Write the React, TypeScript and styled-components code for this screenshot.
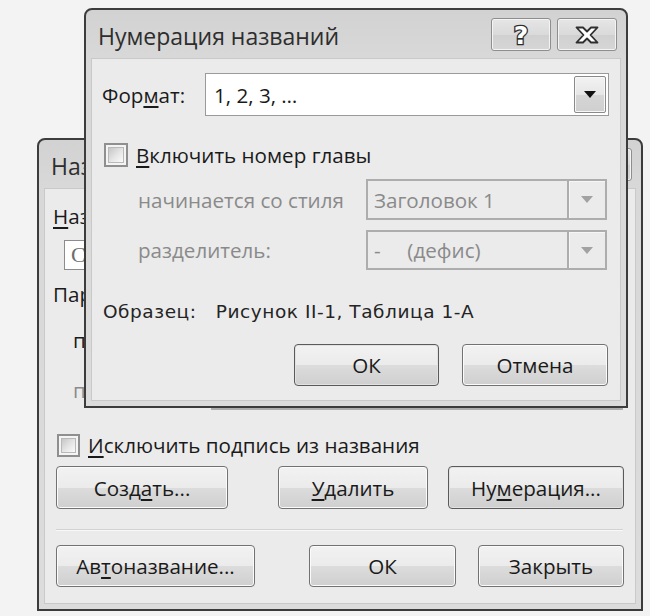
import React from "react";
import styled, { createGlobalStyle } from "styled-components";

const Global = createGlobalStyle`
  html, body { margin: 0; padding: 0; background: #f3f3f3; }
  body { font-family: "Open Sans", "Noto Sans", sans-serif; color: #1a1a1a; }
  * { box-sizing: border-box; }
`;

const Desktop = styled.div`
  position: relative;
  width: 650px;
  height: 616px;
  overflow: hidden;
  background: #f3f3f3;
`;

const Window = styled.div<{ $x: number; $y: number; $w: number; $h: number }>`
  position: absolute;
  left: ${(p) => p.$x}px;
  top: ${(p) => p.$y}px;
  width: ${(p) => p.$w}px;
  height: ${(p) => p.$h}px;
  border: 2px solid #3c3c3c;
  border-radius: 8px 8px 0 0;
  background: linear-gradient(#d2d2d2, #d8d8d8 46px, #dcdcdc);
  display: flex;
  flex-direction: column;
  padding: 0 5px 5px;
`;

const TitleBar = styled.div`
  height: 48px;
  flex: none;
  display: flex;
  align-items: center;
  padding-left: 7px;
  padding-right: 4px;
`;

const TitleText = styled.div`
  flex: 1;
  font-size: 23px;
  color: #2e2e2e;
  white-space: nowrap;
  overflow: hidden;
  margin-top: 3px;
`;

const CaptionButtons = styled.div`
  display: flex;
  gap: 6px;
  align-self: flex-start;
  margin-top: 8px;
`;

const CaptionButton = styled.div`
  width: 60px;
  height: 33px;
  border: 1px solid #8e8e8e;
  border-radius: 3px;
  box-shadow: inset 0 0 0 1px #f4f4f4;
  background: linear-gradient(#e6e6e6, #dadada 50%, #d0d0d0 51%, #d6d6d6);
  display: flex;
  align-items: center;
  justify-content: center;
`;

const Client = styled.div`
  flex: 1;
  background: #ebebeb;
  border: 1px solid #c9c9c9;
  display: flex;
  flex-direction: column;
  font-size: 20.6px;
`;

const Row = styled.div<{ $mt: number; $pl: number; $pr?: number; $h?: number }>`
  display: flex;
  align-items: center;
  margin-top: ${(p) => p.$mt}px;
  padding-left: ${(p) => p.$pl}px;
  padding-right: ${(p) => p.$pr ?? 0}px;
  height: ${(p) => (p.$h ? `${p.$h}px` : "auto")};
  flex: none;
`;

const Label = styled.span<{ $w?: number; $disabled?: boolean }>`
  width: ${(p) => (p.$w ? `${p.$w}px` : "auto")};
  flex: none;
  white-space: nowrap;
  color: ${(p) => (p.$disabled ? "#8a8a8a" : "#1a1a1a")};
`;

const U = styled.span`
  text-decoration: underline;
  text-underline-offset: 3px;
  text-decoration-thickness: 2px;
`;

const Combo = styled.div<{ $disabled?: boolean; $h: number }>`
  flex: 1;
  height: ${(p) => p.$h}px;
  display: flex;
  align-items: stretch;
  border: ${(p) => (p.$disabled ? "2px solid #adadad" : "1px solid #9a9a9a")};
  background: ${(p) => (p.$disabled ? "#ebebeb" : "#ffffff")};
  color: ${(p) => (p.$disabled ? "#8a8a8a" : "#1a1a1a")};
  padding: ${(p) => (p.$disabled ? "0" : "2px")};
`;

const ComboValue = styled.div`
  flex: 1;
  display: flex;
  align-items: center;
  padding-left: 6px;
  white-space: pre;
  overflow: hidden;
`;

const DropButton = styled.div<{ $disabled?: boolean }>`
  width: ${(p) => (p.$disabled ? "38px" : "32px")};
  flex: none;
  display: flex;
  align-items: center;
  justify-content: center;
  border: ${(p) => (p.$disabled ? "none" : "1px solid #8a8a8a")};
  border-left: ${(p) => (p.$disabled ? "2px solid #adadad" : "1px solid #8a8a8a")};
  border-radius: ${(p) => (p.$disabled ? "0" : "2px")};
  background: ${(p) =>
    p.$disabled ? "#ebebeb" : "linear-gradient(#f3f3f3, #e6e6e6 50%, #d6d6d6 51%, #cfcfcf)"};
  box-shadow: ${(p) => (p.$disabled ? "inset 1px 1px 0 #f6f6f6" : "inset 0 0 0 1px #f7f7f7")};
`;

const Arrow = styled.div<{ $disabled?: boolean }>`
  width: 0;
  height: 0;
  border-left: 6px solid transparent;
  border-right: 6px solid transparent;
  border-top: 7px solid ${(p) => (p.$disabled ? "#a2a2a2" : "#111")};
`;

const CheckBox = styled.div<{ $size: number }>`
  width: ${(p) => p.$size}px;
  height: ${(p) => p.$size}px;
  flex: none;
  border: 2px solid #8f8f8f;
  padding: 2px;
  background: #f4f4f4;
  margin-right: 8px;
`;

const CheckInner = styled.div`
  width: 100%;
  height: 100%;
  border: 1px solid #b9b9b9;
  background: linear-gradient(135deg, #c6c6c6, #e6e6e6 55%, #fafafa);
`;

const Sample = styled.div`
  font-family: "DejaVu Sans", "Noto Sans", sans-serif;
  font-size: 18.5px;
  letter-spacing: 0.55px;
  color: #242424;
  white-space: pre;
`;

const Button = styled.div<{ $w: number; $h: number; $ml?: number; $focus?: boolean }>`
  width: ${(p) => p.$w}px;
  height: ${(p) => p.$h}px;
  margin-left: ${(p) => p.$ml ?? 0}px;
  flex: none;
  border: 1px solid ${(p) => (p.$focus ? "#5a5a5a" : "#727272")};
  border-radius: 4px;
  box-shadow: inset 0 0 0 1px ${(p) => (p.$focus ? "#e2e2e2" : "#fbfbfb")};
  background: linear-gradient(#f2f2f2, #ebebeb 50%, #dcdcdc 51%, #cfcfcf);
  display: flex;
  align-items: center;
  justify-content: center;
  white-space: nowrap;
  font-size: 20.6px;
  color: #1a1a1a;
`;

const TextField = styled.div`
  height: 30px;
  flex: 1;
  background: #fff;
  border: 1px solid #8c8c8c;
  display: flex;
  align-items: center;
  padding-left: 6px;
  font-family: "Liberation Serif", serif;
  font-size: 22px;
  color: #6e6e6e;
`;

const Separator = styled.div`
  margin: 20px 12px 0 11px;
  height: 2px;
  border-top: 1px solid #d2d2d2;
  border-bottom: 1px solid #f8f8f8;
  flex: none;
`;

const HelpIcon = () => (
  <svg width="22" height="28" viewBox="0 0 22 28">
    <text
      x="11"
      y="23"
      textAnchor="middle"
      fontFamily="DejaVu Sans, sans-serif"
      fontWeight="bold"
      fontSize="25"
      fill="#ffffff"
      stroke="#2e2e2e"
      strokeWidth="2.6"
      paintOrder="stroke"
    >
      ?
    </text>
  </svg>
);

const CloseIcon = () => (
  <svg width="24" height="18" viewBox="0 0 24 18">
    <path
      d="M1.5 1.5 H8 L12 5.5 L16 1.5 H22.5 L15.5 9 L22.5 16.5 H16 L12 12.5 L8 16.5 H1.5 L8.5 9 Z"
      fill="#ffffff"
      stroke="#2e2e2e"
      strokeWidth="1.8"
      strokeLinejoin="round"
    />
  </svg>
);

export default function App() {
  return (
    <Desktop>
      <Global />
      {/* Back dialog: Название */}
      <Window $x={37} $y={138} $w={606} $h={473}>
        <TitleBar>
          <TitleText>Название</TitleText>
          <CaptionButtons>
            <CaptionButton>
              <CloseIcon />
            </CaptionButton>
          </CaptionButtons>
        </TitleBar>
        <Client>
          <Row $mt={13} $pl={8}>
            <Label>
              <U>Н</U>азвание:
            </Label>
          </Row>
          <Row $mt={10} $pl={19} $pr={12}>
            <TextField>Схема 1</TextField>
          </Row>
          <Row $mt={10} $pl={8}>
            <Label>Параметры</Label>
          </Row>
          <Row $mt={11} $pl={28} $pr={12} $h={41}>
            <Label $w={138}>подпись:</Label>
            <Combo $h={41}>
              <ComboValue />
              <DropButton>
                <Arrow />
              </DropButton>
            </Combo>
          </Row>
          <Row $mt={9} $pl={28} $pr={12} $h={41}>
            <Label $w={138} $disabled>
              положение:
            </Label>
            <Combo $h={41} $disabled>
              <ComboValue />
              <DropButton $disabled>
                <Arrow $disabled />
              </DropButton>
            </Combo>
          </Row>
          <Row $mt={21} $pl={12}>
            <CheckBox $size={23}>
              <CheckInner />
            </CheckBox>
            <Label>
              <U>И</U>сключить подпись из названия
            </Label>
          </Row>
          <Row $mt={7} $pl={11}>
            <Button $w={172} $h={43}>
              Созд<U>а</U>ть...
            </Button>
            <Button $w={150} $h={43} $ml={50}>
              <U>У</U>далить
            </Button>
            <Button $w={176} $h={43} $ml={20} $focus>
              Ну<U>м</U>ерация...
            </Button>
          </Row>
          <Separator />
          <Row $mt={14} $pl={11}>
            <Button $w={199} $h={42}>
              Ав<U>т</U>оназвание...
            </Button>
            <Button $w={147} $h={42} $ml={54}>
              ОК
            </Button>
            <Button $w={146} $h={42} $ml={22}>
              Закрыть
            </Button>
          </Row>
        </Client>
      </Window>

      {/* Front dialog: Нумерация названий */}
      <Window $x={84} $y={8} $w={544} $h={400}>
        <TitleBar>
          <TitleText>Нумерация названий</TitleText>
          <CaptionButtons>
            <CaptionButton>
              <HelpIcon />
            </CaptionButton>
            <CaptionButton>
              <CloseIcon />
            </CaptionButton>
          </CaptionButtons>
        </TitleBar>
        <Client>
          <Row $mt={14} $pl={10} $pr={11} $h={43}>
            <Label $w={103}>
              Фор<U>м</U>ат:
            </Label>
            <Combo $h={43}>
              <ComboValue>1, 2, 3, …</ComboValue>
              <DropButton>
                <Arrow />
              </DropButton>
            </Combo>
          </Row>
          <Row $mt={25} $pl={12}>
            <CheckBox $size={24}>
              <CheckInner />
            </CheckBox>
            <Label>
              <U>В</U>ключить номер главы
            </Label>
          </Row>
          <Row $mt={10} $pl={46} $pr={13} $h={41}>
            <Label $w={228} $disabled>
              начинается со стиля
            </Label>
            <Combo $h={41} $disabled>
              <ComboValue>Заголовок 1</ComboValue>
              <DropButton $disabled>
                <Arrow $disabled />
              </DropButton>
            </Combo>
          </Row>
          <Row $mt={10} $pl={46} $pr={13} $h={40}>
            <Label $w={228} $disabled>
              разделитель:
            </Label>
            <Combo $h={40} $disabled>
              <ComboValue>{"-     (дефис)"}</ComboValue>
              <DropButton $disabled>
                <Arrow $disabled />
              </DropButton>
            </Combo>
          </Row>
          <Row $mt={31} $pl={11}>
            <Sample>{"Образец:   Рисунок II-1, Таблица 1-А"}</Sample>
          </Row>
          <Row $mt={22} $pl={202}>
            <Button $w={145} $h={42} $focus>
              ОК
            </Button>
            <Button $w={146} $h={42} $ml={23}>
              Отмена
            </Button>
          </Row>
        </Client>
      </Window>
    </Desktop>
  );
}
